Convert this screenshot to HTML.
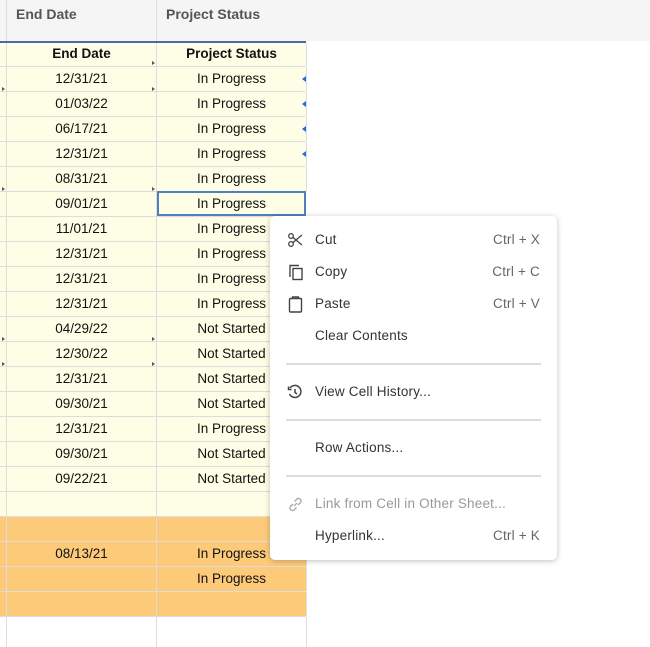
<!DOCTYPE html>
<html><head><style>
body{margin:0;width:650px;height:636px;overflow:hidden;background:#fff;font-family:"Liberation Sans",Arial,sans-serif;position:relative}
.top{position:absolute;left:0;top:0;width:650px;height:41px;background:#f6f5f5}
.top span{position:absolute;top:6px;font-size:14px;color:#555;font-weight:bold}
.vl{position:absolute;top:0;height:41px;width:1px;background:#ddd}
.grid{position:absolute;left:0;top:41px;width:306px;border-top:2px solid #4a67a8}
.row{height:24px;border-bottom:1px solid #ddd;position:relative;font-size:13.5px;color:#111}
.row div{position:absolute;top:0;line-height:24px;text-align:center}
.c0{left:0;width:6px;border-right:1px solid #ddd;height:24px}
.c1{left:7px;width:149px;border-right:1px solid #ddd;height:24px}
.c2{left:157px;width:149px;border-right:1px solid #ddd;height:24px}
.y{background:#fefee6}.o{background:#fdca7a}.w{background:#fff}
.menu{position:absolute;left:270px;top:216px;width:287px;height:344px;background:#fff;border-radius:5px;box-shadow:0 1px 6px rgba(0,0,0,.25);font-size:13.5px;color:#333;letter-spacing:0.2px}
.it{position:absolute;left:45px}
.sc{position:absolute;right:17px;color:#666}
.sep{position:absolute;left:16px;width:255px;height:2px;background:#ddd}
.tri{position:absolute;width:0;height:0;border-top:2px solid transparent;border-bottom:2px solid transparent;border-left:3px solid #555}
.bl{position:absolute;width:0;height:0;border-top:3px solid transparent;border-bottom:3px solid transparent;border-right:4px solid #1e6fd9}
</style></head><body>
<div class="top"><span style="left:16px">End Date</span><span style="left:166px">Project Status</span></div>
<div class="vl" style="left:6px"></div><div class="vl" style="left:156px"></div>
<div class="grid">
<div class="row y" style="height:23px"><div class="c0" style="height:23px"></div><div class="c1" style="height:23px;line-height:22px"><b>End Date</b></div><div class="c2" style="height:23px;line-height:22px"><b>Project Status</b></div></div>
<div class="row y"><div class="c0"></div><div class="c1">12/31/21</div><div class="c2">In Progress</div></div>
<div class="row y"><div class="c0"></div><div class="c1">01/03/22</div><div class="c2">In Progress</div></div>
<div class="row y"><div class="c0"></div><div class="c1">06/17/21</div><div class="c2">In Progress</div></div>
<div class="row y"><div class="c0"></div><div class="c1">12/31/21</div><div class="c2">In Progress</div></div>
<div class="row y"><div class="c0"></div><div class="c1">08/31/21</div><div class="c2">In Progress</div></div>
<div class="row y"><div class="c0"></div><div class="c1">09/01/21</div><div class="c2" style="box-sizing:border-box;border:2px solid #4f7fc0;line-height:21px;height:25px;top:-1px">In Progress</div></div>
<div class="row y"><div class="c0"></div><div class="c1">11/01/21</div><div class="c2">In Progress</div></div>
<div class="row y"><div class="c0"></div><div class="c1">12/31/21</div><div class="c2">In Progress</div></div>
<div class="row y"><div class="c0"></div><div class="c1">12/31/21</div><div class="c2">In Progress</div></div>
<div class="row y"><div class="c0"></div><div class="c1">12/31/21</div><div class="c2">In Progress</div></div>
<div class="row y"><div class="c0"></div><div class="c1">04/29/22</div><div class="c2">Not Started</div></div>
<div class="row y"><div class="c0"></div><div class="c1">12/30/22</div><div class="c2">Not Started</div></div>
<div class="row y"><div class="c0"></div><div class="c1">12/31/21</div><div class="c2">Not Started</div></div>
<div class="row y"><div class="c0"></div><div class="c1">09/30/21</div><div class="c2">Not Started</div></div>
<div class="row y"><div class="c0"></div><div class="c1">12/31/21</div><div class="c2">In Progress</div></div>
<div class="row y"><div class="c0"></div><div class="c1">09/30/21</div><div class="c2">Not Started</div></div>
<div class="row y"><div class="c0"></div><div class="c1">09/22/21</div><div class="c2">Not Started</div></div>
<div class="row y"><div class="c0"></div><div class="c1"></div><div class="c2"></div></div>
<div class="row o"><div class="c0"></div><div class="c1"></div><div class="c2"></div></div>
<div class="row o"><div class="c0"></div><div class="c1">08/13/21</div><div class="c2">In Progress</div></div>
<div class="row o"><div class="c0"></div><div class="c1"></div><div class="c2">In Progress</div></div>
<div class="row o"><div class="c0"></div><div class="c1"></div><div class="c2"></div></div>
<div class="row w" style="border:0"><div class="c0" style="height:30px"></div><div class="c1" style="height:30px"></div><div class="c2" style="height:30px"></div></div>
</div>
<div class="tri" style="left:2px;top:87px"></div><div class="tri" style="left:152px;top:87px"></div><div class="tri" style="left:152px;top:61px"></div>
<div class="tri" style="left:2px;top:187px"></div><div class="tri" style="left:152px;top:187px"></div>
<div class="tri" style="left:2px;top:337px"></div><div class="tri" style="left:152px;top:337px"></div>
<div class="tri" style="left:2px;top:362px"></div><div class="tri" style="left:152px;top:362px"></div>
<div class="bl" style="left:302px;top:76px"></div><div class="bl" style="left:302px;top:101px"></div><div class="bl" style="left:302px;top:126px"></div><div class="bl" style="left:302px;top:151px"></div>
<div class="menu">
<svg style="position:absolute;left:17px;top:16px" width="16" height="16" viewBox="0 0 16 16" fill="none" stroke="#444" stroke-width="1.3"><circle cx="4" cy="4" r="2.3"/><circle cx="4" cy="12" r="2.3"/><path d="M6 5.5L15 13M6 10.5L15 3"/></svg>
<div class="it" style="top:16px">Cut</div><div class="sc" style="top:16px">Ctrl + X</div>
<svg style="position:absolute;left:18px;top:48px" width="16" height="17" viewBox="0 0 16 17" fill="none" stroke="#444" stroke-width="1.4"><path d="M2 13V1.5h9"/><rect x="5" y="4.5" width="9" height="11"/></svg>
<div class="it" style="top:48px">Copy</div><div class="sc" style="top:48px">Ctrl + C</div>
<svg style="position:absolute;left:18px;top:80px" width="15" height="17" viewBox="0 0 15 17" fill="none" stroke="#444" stroke-width="1.4"><rect x="1.5" y="2.5" width="12" height="13.5" rx="1"/><path d="M4.5 2.5V1h6v1.5"/></svg>
<div class="it" style="top:80px">Paste</div><div class="sc" style="top:80px">Ctrl + V</div>
<div class="it" style="top:112px">Clear Contents</div>
<div class="sep" style="top:147px"></div>
<svg style="position:absolute;left:17px;top:168px" width="16" height="16" viewBox="0 0 16 16" fill="none" stroke="#444" stroke-width="1.5"><path d="M3 4A6 6 0 1 1 2.5 10"/><path d="M1.5 2.5v3h3"/><path d="M8 5v3.5l2 1.5"/></svg>
<div class="it" style="top:168px">View Cell History...</div>
<div class="sep" style="top:203px"></div>
<div class="it" style="top:224px">Row Actions...</div>
<div class="sep" style="top:259px"></div>
<svg style="position:absolute;left:17px;top:280px" width="17" height="17" viewBox="0 0 17 17" fill="none" stroke="#aaa" stroke-width="1.4"><path d="M7 10L10 7"/><path d="M6 8L3.5 10.5a2.5 2.5 0 0 0 3.5 3.5L9.5 11.5"/><path d="M11 9L13.5 6.5a2.5 2.5 0 0 0-3.5-3.5L7.5 5.5"/></svg>
<div class="it" style="top:280px;color:#999">Link from Cell in Other Sheet...</div>
<div class="it" style="top:312px">Hyperlink...</div><div class="sc" style="top:312px">Ctrl + K</div>
</div>
</body></html>
